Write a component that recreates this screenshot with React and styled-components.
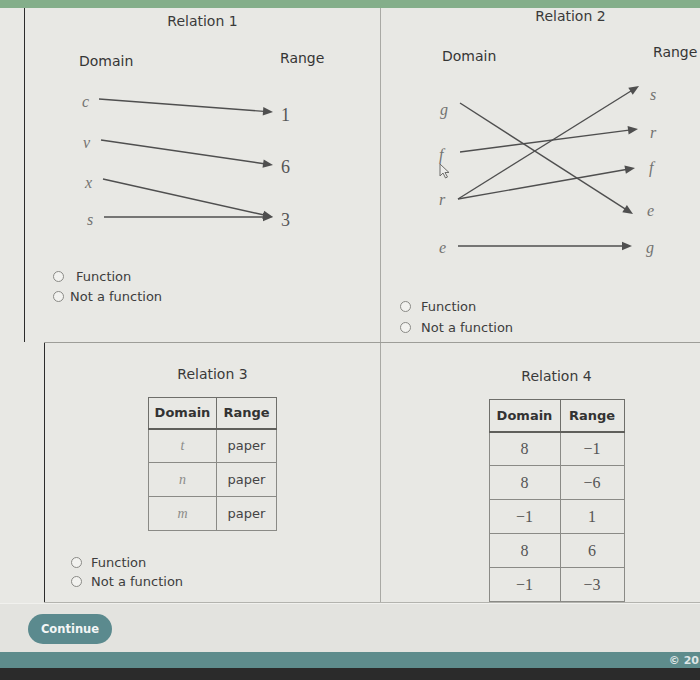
import React from "react";
import styled, { createGlobalStyle } from "styled-components";

const GlobalStyle = createGlobalStyle`
  html, body { margin: 0; padding: 0; background: #e8e8e4; }
  body { font-family: "DejaVu Sans", Verdana, sans-serif; color: #333; }
  * { box-sizing: border-box; }
`;

const Page = styled.div`
  width: 700px;
  height: 680px;
  overflow: hidden;
  background: #e8e8e4;
  display: flex;
  flex-direction: column;
`;

const TopStrip = styled.div`
  height: 8px;
  flex: none;
  background: #84ae8a;
`;

const Row = styled.div`
  display: flex;
  flex: none;
  height: ${(p) => p.$height}px;
  margin-left: ${(p) => p.$offset}px;
  border-top: ${(p) => (p.$topLine ? "1px solid #9d9d98" : "none")};
  border-bottom: ${(p) => (p.$bottomLine ? "1px solid #b3b3ae" : "none")};
`;

const Cell = styled.div`
  flex: none;
  width: ${(p) => p.$width}px;
  display: flex;
  flex-direction: column;
  border-left: ${(p) => (p.$dark ? "1.5px solid #2c2c2c" : "1px solid #a9a9a4")};
  padding-top: ${(p) => p.$pt}px;
`;

const Title = styled.div`
  font-size: 14px;
  line-height: 17px;
  color: #3a3a3a;
  text-align: center;
`;

const DiagramSvg = styled.svg`
  display: block;
  flex: none;
  margin-top: ${(p) => p.$mt}px;
  overflow: visible;
`;

const Choices = styled.div`
  display: flex;
  flex-direction: column;
  margin-top: ${(p) => p.$mt}px;
  padding-left: ${(p) => p.$pl}px;
`;

const Choice = styled.label`
  display: flex;
  align-items: center;
  gap: ${(p) => p.$gap}px;
  height: ${(p) => p.$lh}px;
  font-size: 13px;
  color: #3d3d3d;
  white-space: nowrap;
`;

const RadioCircle = styled.span`
  width: 11px;
  height: 11px;
  flex: none;
  border-radius: 50%;
  border: 1.5px solid #8a8a86;
  background: #f2f2ef;
`;

const Table = styled.table`
  border-collapse: collapse;
  margin: ${(p) => p.$mt}px auto 0;
  border: 1px solid #5a5a57;
`;

const Th = styled.th`
  width: ${(p) => p.$w}px;
  height: ${(p) => p.$h}px;
  padding: 0;
  font-size: 13px;
  font-weight: bold;
  color: #333;
  text-align: center;
  border: 1px solid #6e6e6a;
  border-bottom: 2px solid #5f5f5b;
`;

const Td = styled.td`
  height: 34px;
  padding: 0;
  text-align: center;
  border: 1px solid #8a8a86;
  font-family: ${(p) =>
    p.$kind === "word" ? '"DejaVu Sans", Verdana, sans-serif' : '"Liberation Serif", "Times New Roman", serif'};
  font-style: ${(p) => (p.$kind === "var" ? "italic" : "normal")};
  font-size: ${(p) => (p.$kind === "word" ? 13 : p.$kind === "var" ? 14 : 16)}px;
  color: ${(p) => (p.$kind === "var" ? "#8c8c8a" : p.$kind === "word" ? "#444" : "#555")};
`;

const ButtonBar = styled.div`
  flex: none;
  height: 49px;
  padding: 10px 0 0 28px;
  border-top: 1px solid #f1f1ee;
  background: #e3e3df;
`;

const ContinueButton = styled.button`
  width: 84px;
  height: 30px;
  border: none;
  border-radius: 15px;
  background: #5b8a8e;
  color: #f4f6f6;
  font-family: "DejaVu Sans", Verdana, sans-serif;
  font-weight: bold;
  font-size: 11.5px;
  padding: 0;
`;

const FooterBar = styled.div`
  flex: none;
  height: 16px;
  background: #5e8c8c;
  display: flex;
  justify-content: flex-end;
  align-items: center;
  padding-right: 1px;
  margin-top: auto;
  font-size: 11px;
  font-weight: bold;
  color: #dfe6e6;
`;

const FooterDark = styled.div`
  flex: none;
  height: 12px;
  background: #2b2b2b;
`;

const Arrow = ({ x1, y1, x2, y2 }) => {
  const dx = x2 - x1;
  const dy = y2 - y1;
  const len = Math.hypot(dx, dy);
  const ux = dx / len;
  const uy = dy / len;
  const hl = 10;
  const hw = 4.2;
  const bx = x2 - ux * hl;
  const by = y2 - uy * hl;
  const px = -uy;
  const py = ux;
  const pts = `${x2},${y2} ${bx + px * hw},${by + py * hw} ${bx - px * hw},${by - py * hw}`;
  return (
    <g>
      <line x1={x1} y1={y1} x2={bx + ux} y2={by + uy} stroke="#4f4f4f" strokeWidth="1.4" />
      <polygon points={pts} fill="#4f4f4f" />
    </g>
  );
};

const Label = ({ x, y, children }) => (
  <text x={x} y={y} fontFamily='"DejaVu Sans", Verdana, sans-serif' fontSize="14" fill="#353535">
    {children}
  </text>
);

const Var = ({ x, y, children }) => (
  <text x={x} y={y} fontFamily='"Liberation Serif", "Times New Roman", serif' fontStyle="italic" fontSize="16" fill="#737371">
    {children}
  </text>
);

const Num = ({ x, y, children }) => (
  <text x={x} y={y} fontFamily='"Liberation Serif", "Times New Roman", serif' fontSize="18" fill="#555">
    {children}
  </text>
);

const Diagram1 = () => (
  <DiagramSvg $mt={0} width="356" height="210" viewBox="0 0 356 210">
    <Label x={54} y={36}>Domain</Label>
    <Label x={255} y={33}>Range</Label>
    <Var x={57} y={77}>c</Var>
    <Var x={58} y={118}>v</Var>
    <Var x={60} y={158}>x</Var>
    <Var x={62} y={195}>s</Var>
    <Num x={256} y={91}>1</Num>
    <Num x={256} y={143}>6</Num>
    <Num x={256} y={196}>3</Num>
    <Arrow x1={74} y1={69} x2={248} y2={82} />
    <Arrow x1={76} y1={110} x2={248} y2={135} />
    <Arrow x1={78} y1={149} x2={248} y2={187} />
    <Arrow x1={79} y1={187} x2={248} y2={187} />
  </DiagramSvg>
);

const Diagram2 = () => (
  <DiagramSvg $mt={3} width="380" height="230" viewBox="0 0 380 230">
    <Label x={61} y={33}>Domain</Label>
    <Label x={272} y={29}>Range</Label>
    <Var x={59} y={87}>g</Var>
    <Var x={58} y={132}>f</Var>
    <Var x={58} y={177}>r</Var>
    <Var x={58} y={225}>e</Var>
    <Var x={269} y={72}>s</Var>
    <Var x={269} y={110}>r</Var>
    <Var x={268} y={145}>f</Var>
    <Var x={266} y={188}>e</Var>
    <Var x={265} y={225}>g</Var>
    <Arrow x1={79} y1={75} x2={252} y2={186} />
    <Arrow x1={79} y1={124} x2={257} y2={101} />
    <Arrow x1={77} y1={171} x2={258} y2={58} />
    <Arrow x1={77} y1={171} x2={254} y2={140} />
    <Arrow x1={77} y1={218} x2={251} y2={218} />
    <path
      d="M59 136 L59 148 L62 145 L64.5 150 L66.5 149 L64 144.5 L68 144.5 Z"
      fill="#ececea"
      stroke="#6d6d6a"
      strokeWidth="1"
      strokeLinejoin="round"
    />
  </DiagramSvg>
);

const ChoiceGroup = ({ mt, pl, gap, lh, firstLead }) => (
  <Choices $mt={mt} $pl={pl}>
    <Choice $gap={gap + (firstLead || 0)} $lh={lh}>
      <RadioCircle />
      Function
    </Choice>
    <Choice $gap={gap} $lh={lh}>
      <RadioCircle />
      Not a function
    </Choice>
  </Choices>
);

const rel3 = ["t", "n", "m"];
const rel4 = [
  ["8", "−1"],
  ["8", "−6"],
  ["−1", "1"],
  ["8", "6"],
  ["−1", "−3"],
];

export default function App() {
  return (
    <>
      <GlobalStyle />
      <Page>
        <TopStrip />
        <Row $offset={24} $height={334}>
          <Cell $width={356} $dark $pt={5}>
            <Title>Relation 1</Title>
            <Diagram1 />
            <ChoiceGroup mt={26} pl={28} gap={6} lh={20} firstLead={6} />
          </Cell>
          <Cell $width={380} $pt={0}>
            <Title>Relation 2</Title>
            <Diagram2 />
            <ChoiceGroup mt={38} pl={19} gap={10} lh={21} />
          </Cell>
        </Row>
        <Row $offset={44} $height={261} $topLine $bottomLine>
          <Cell $width={336} $dark $pt={23}>
            <Title>Relation 3</Title>
            <Table $mt={14}>
              <thead>
                <tr>
                  <Th $w={68} $h={31}>Domain</Th>
                  <Th $w={60} $h={31}>Range</Th>
                </tr>
              </thead>
              <tbody>
                {rel3.map((v) => (
                  <tr key={v}>
                    <Td $kind="var">{v}</Td>
                    <Td $kind="word">paper</Td>
                  </tr>
                ))}
              </tbody>
            </Table>
            <ChoiceGroup mt={22} pl={26} gap={9} lh={19} />
          </Cell>
          <Cell $width={352} $pt={25}>
            <Title>Relation 4</Title>
            <Table $mt={14}>
              <thead>
                <tr>
                  <Th $w={71} $h={32}>Domain</Th>
                  <Th $w={64} $h={32}>Range</Th>
                </tr>
              </thead>
              <tbody>
                {rel4.map(([d, r], i) => (
                  <tr key={i}>
                    <Td $kind="num">{d}</Td>
                    <Td $kind="num">{r}</Td>
                  </tr>
                ))}
              </tbody>
            </Table>
          </Cell>
        </Row>
        <ButtonBar>
          <ContinueButton>Continue</ContinueButton>
        </ButtonBar>
        <FooterBar>© 20</FooterBar>
        <FooterDark />
      </Page>
    </>
  );
}
